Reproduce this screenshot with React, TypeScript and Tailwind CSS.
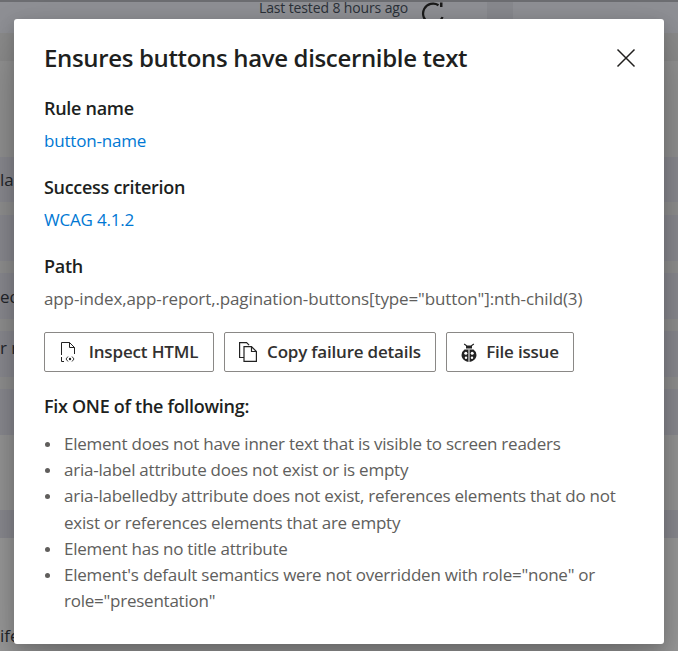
const backdropRows = [
  { height: "h-[28px]", tone: "bg-[#8b8b8b]" },
  { height: "h-[96px]", tone: "bg-[#929292]" },
  { height: "h-[45px]", tone: "bg-[#8b8b91]" },
  { height: "h-[13px]", tone: "bg-[#919191]" },
  { height: "h-[46px]", tone: "bg-[#8b8b91]" },
  { height: "h-[12px]", tone: "bg-[#919191]" },
  { height: "h-[46px]", tone: "bg-[#8b8b91]" },
  { height: "h-[12px]", tone: "bg-[#919191]" },
  { height: "h-[46px]", tone: "bg-[#8b8b91]" },
  { height: "h-[12px]", tone: "bg-[#919191]" },
  { height: "h-[46px]", tone: "bg-[#8b8b91]" },
  { height: "h-[75px]", tone: "bg-[#969696]" },
  { height: "h-[28px]", tone: "bg-[#8b8b91]" },
  { height: "h-[113px]", tone: "bg-[#9a9a9a]" },
];

const failures = [
  "Element does not have inner text that is visible to screen readers",
  "aria-label attribute does not exist or is empty",
  "aria-labelledby attribute does not exist, references elements that do not exist or references elements that are empty",
  "Element has no title attribute",
  'Element\'s default semantics were not overridden with role="none" or role="presentation"',
];

function CloseIcon() {
  return (
    <svg width="20" height="20" viewBox="0 0 20 20" fill="none" stroke="#201f1e" strokeWidth="1.5">
      <path d="M1.500 1.500l17 17M18.500 1.500l-17 17" />
    </svg>
  );
}

function InspectIcon() {
  return (
    <svg width="17" height="20" viewBox="0 0 17 20" fill="none" stroke="#222" strokeWidth="1">
      <path d="M1.500 13V.5h8l5 5V12M9.500.500v5h5" />
      <path d="M1.500 15v4.500H4" />
      <path d="M8 14.500l-2 2.500 2 2.500M12 14.500l2 2.500-2 2.500" strokeWidth="0.900" />
      <circle cx="10" cy="17" r="1.200" fill="#222" stroke="none" />
    </svg>
  );
}

function CopyIcon() {
  return (
    <svg width="18" height="20" viewBox="0 0 18 20" fill="none" stroke="#222" strokeWidth="1.200">
      <path d="M5 15.500H.6V.6h7l2.500 2.500" />
      <path d="M5 4.600h7.500l4.900 4.900v9.900H5zM12.500 4.600v4.900h4.900" />
    </svg>
  );
}

function BugIcon() {
  return (
    <svg width="16" height="19" viewBox="0 0 16 19" fill="#222">
      <path d="M3.500.500l2.700 2h3.600l2.700-2 .7.900-2.200 1.700v2.400H5V3.100L2.800 1.400z" />
      <path d="M3.500 6.500h9A7 7 0 0 1 15.500 12c0 3.700-3.300 6.800-7.500 6.800S.5 15.700.5 12a7 7 0 0 1 3-5.500z" />
      <circle cx="4.800" cy="10.200" r="1.500" fill="#fff" />
      <circle cx="11.200" cy="10.200" r="1.500" fill="#fff" />
      <circle cx="5" cy="14.800" r="1.200" fill="#fff" />
      <circle cx="11" cy="14.800" r="1.200" fill="#fff" />
      <rect x="7.500" y="6.500" width="1" height="12.300" fill="#fff" />
    </svg>
  );
}

function Spinner() {
  return (
    <svg width="24" height="24" viewBox="0 0 24 24" fill="none" stroke="#1a1a1a" strokeWidth="2.200">
      <path d="M17.500 4.200A10 10 0 1 0 21.500 16" />
      <path d="M19 1.500h2.500V6H19z" fill="#1a1a1a" stroke="none" />
    </svg>
  );
}

export default function App() {
  return (
    <div className="relative h-[651px] w-[678px] overflow-hidden font-['Open_Sans','Liberation_Sans',sans-serif]">
      <div className="flex h-full flex-col border-t-2 border-[#6d6e72]">
        <div className="flex h-[31px] shrink-0 bg-[#8f9095]">
          <div className="ml-[487px] h-full w-[26px] bg-[#88898e]" />
        </div>
        {backdropRows.map((row, index) => (
          <div key={index} className={`${row.height} ${row.tone} shrink-0`} />
        ))}
      </div>

      <div className="absolute left-[259px] top-0 flex items-start gap-[13px] text-[14px] leading-[15px] tracking-[-0.13px] text-[#2b3038]">
        <span>Last tested 8 hours ago</span>
        <span className="mt-px">
          <Spinner />
        </span>
      </div>
      <span className="absolute left-0 top-[167px] text-[17px] text-[#23262b]">la</span>
      <span className="absolute left-0 top-[284px] text-[17px] text-[#23262b]">ed</span>
      <span className="absolute left-0 top-[335px] text-[17px] text-[#23262b]">r r</span>
      <span className="absolute left-0 top-[623px] text-[17px] text-[#23262b]">ife</span>

      <div className="absolute left-[14px] top-[19px] h-[625px] w-[650px] rounded-[3px] bg-white px-[30px] pt-[22px] shadow-[0_25.6px_57.6px_rgba(0,0,0,0.22),0_4.8px_14.4px_rgba(0,0,0,0.18)]">
        <div className="flex items-start justify-between">
          <h1 className="text-[24px] font-semibold leading-[34px] tracking-[-0.34px] text-[#201f1e]">
            Ensures buttons have discernible text
          </h1>
          <button type="button" className="mr-[-2px] mt-[7px]">
            <CloseIcon />
          </button>
        </div>

        <h2 className="mt-[21px] text-[18px] font-semibold leading-[24px] tracking-[-0.3px] text-[#201f1e]">Rule name</h2>
        <a className="mt-[9px] block text-[17px] leading-[24px] tracking-[-0.2px] text-[#0078d4]">button-name</a>

        <h2 className="mt-[22px] text-[18px] font-semibold leading-[24px] tracking-[-0.3px] text-[#201f1e]">Success criterion</h2>
        <a className="mt-[9px] block text-[17px] leading-[24px] tracking-[-0.2px] text-[#0078d4]">WCAG 4.1.2</a>

        <h2 className="mt-[22px] text-[18px] font-semibold leading-[24px] tracking-[-0.3px] text-[#201f1e]">Path</h2>
        <p className="mt-[9px] whitespace-nowrap text-[17px] leading-[24px] tracking-[-0.12px] text-[#605e5c]">
          app-index,app-report,.pagination-buttons[type="button"]:nth-child(3)
        </p>

        <div className="mt-[21px] flex gap-[10px]">
          <button type="button" className="flex h-[40px] w-[170px] items-center justify-center gap-[12px] rounded-[2px] border border-[#8a8886] text-[17px] font-semibold tracking-[-0.15px] text-[#323130]">
            <InspectIcon />
            Inspect HTML
          </button>
          <button type="button" className="flex h-[40px] w-[212px] items-center justify-center gap-[10px] rounded-[2px] border border-[#8a8886] text-[17px] font-semibold tracking-[-0.2px] text-[#323130]">
            <CopyIcon />
            Copy failure details
          </button>
          <button type="button" className="flex h-[40px] w-[128px] items-center justify-center gap-[9px] rounded-[2px] border border-[#8a8886] text-[17px] font-semibold tracking-[-0.2px] text-[#323130]">
            <BugIcon />
            File issue
          </button>
        </div>

        <h2 className="mt-[22px] text-[18px] font-semibold leading-[24px] tracking-[-0.3px] text-[#201f1e]">Fix ONE of the following:</h2>
        <ul className="mt-[13px] text-[17px] leading-[26.2px] tracking-[-0.24px] text-[#605e5c]">
          {failures.map((failure) => (
            <li key={failure} className="flex">
              <span className="ml-px mr-[14px] mt-[11px] h-[5px] w-[5px] shrink-0 rounded-full bg-[#605e5c]" />
              <span>{failure}</span>
            </li>
          ))}
        </ul>
      </div>
    </div>
  );
}
